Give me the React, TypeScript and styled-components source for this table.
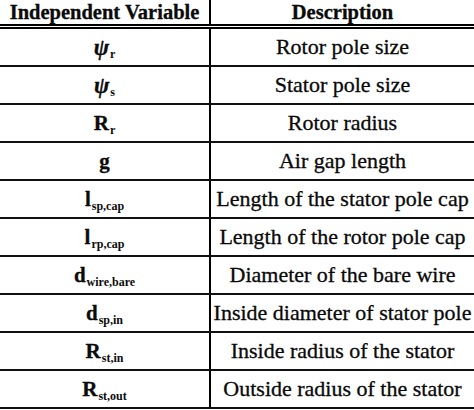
import { createGlobalStyle } from 'styled-components';
import styled from 'styled-components';

// --- Dados da tabela ---
const rows = [
  { sym: 'ψ', sub: 'r', greek: true, desc: 'Rotor pole size' },
  { sym: 'ψ', sub: 's', greek: true, desc: 'Stator pole size' },
  { sym: 'R', sub: 'r', desc: 'Rotor radius' },
  { sym: 'g', sub: '', desc: 'Air gap length' },
  { sym: 'l', sub: 'sp,cap', desc: 'Length of the stator pole cap' },
  { sym: 'l', sub: 'rp,cap', desc: 'Length of the rotor pole cap' },
  { sym: 'd', sub: 'wire,bare', desc: 'Diameter of the bare wire' },
  { sym: 'd', sub: 'sp,in', desc: 'Inside diameter of stator pole' },
  { sym: 'R', sub: 'st,in', desc: 'Inside radius of the stator' },
  { sym: 'R', sub: 'st,out', desc: 'Outside radius of the stator' },
];

const GlobalStyle = createGlobalStyle`
  html, body {
    margin: 0;
    padding: 0;
    background: #ffffff;
  }
  body {
    font-family: 'Liberation Serif', 'DejaVu Serif', serif;
    color: #0c0c0c;
  }
`;

const Table = styled.div`
  width: 474px;
  height: 410px;
  overflow: hidden;
`;

const HeaderRow = styled.div`
  display: grid;
  grid-template-columns: 209px 1fr;
  height: 29px;
  box-sizing: border-box;
  border-bottom: 5px double #000;
`;

const HeaderCell = styled.div<{ $divider?: boolean }>`
  display: flex;
  align-items: center;
  justify-content: center;
  font-size: 20.5px;
  font-weight: bold;
  white-space: nowrap;
  line-height: 22px;
  -webkit-text-stroke: 0.3px #000;
  border-left: ${(p) => (p.$divider ? '2px solid #000' : 'none')};
`;

const Row = styled.div`
  display: grid;
  grid-template-columns: 209px 1fr;
  height: 38px;
  box-sizing: border-box;
  border-bottom: 2px solid #111;
`;

const Cell = styled.div<{ $divider?: boolean }>`
  display: flex;
  align-items: center;
  justify-content: center;
  white-space: nowrap;
  font-size: 22px;
  -webkit-text-stroke: 0.3px #000;
  border-left: ${(p) => (p.$divider ? '2px solid #000' : 'none')};
`;

const Symbol = styled.span<{ $greek?: boolean }>`
  font-weight: bold;
  font-size: ${(p) => (p.$greek ? '23px' : '21px')};
  font-style: ${(p) => (p.$greek ? 'italic' : 'normal')};
  line-height: 1;
`;

const Sub = styled.span`
  display: inline-block;
  position: relative;
  top: 7px;
  margin-left: 1px;
  font-size: 12px;
  font-weight: bold;
  -webkit-text-stroke: 0;
  line-height: 1;
`;

export default function App() {
  return (
    <>
      <GlobalStyle />
      <Table>
        <HeaderRow>
          <HeaderCell>Independent Variable</HeaderCell>
          <HeaderCell $divider>Description</HeaderCell>
        </HeaderRow>
        {rows.map((r, i) => (
          <Row key={i}>
            <Cell>
              <Symbol $greek={r.greek}>{r.sym}</Symbol>
              {r.sub && <Sub>{r.sub}</Sub>}
            </Cell>
            <Cell $divider>{r.desc}</Cell>
          </Row>
        ))}
      </Table>
    </>
  );
}
